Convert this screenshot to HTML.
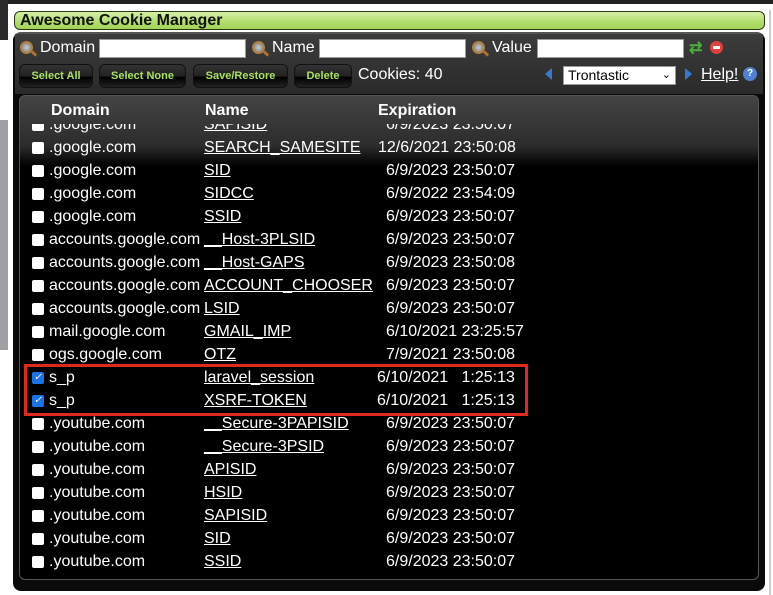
<!DOCTYPE html>
<html><head><meta charset="utf-8"><style>
*{margin:0;padding:0;box-sizing:border-box}
body{width:773px;height:595px;overflow:hidden;background:#fff;font-family:"Liberation Sans",Arial,sans-serif;position:relative}
.abs{position:absolute}
.title{left:14px;top:11px;width:751px;height:19px;border:1px solid #2a3a10;border-radius:6px;background:linear-gradient(#d6f0a8,#b0dc6a 60%,#a5d45c);font-weight:bold;font-size:16px;line-height:17px;padding-left:5px;color:#111}
.panel{left:13px;top:32px;width:752px;height:559px;background:#0a0a0a;border-radius:8px;border-top:2px solid #555}
.panelTop{left:15px;top:34px;width:748px;height:60px;background:linear-gradient(#3c3c3c,#2a2a2a)}
.lbl{color:#fff;font-size:16px;top:39px}
.inp{background:#fff;border:1px solid #999;height:19px;top:39px}
.mag{width:13px;height:13px;border-radius:50%;border:2px solid #b08040;background:radial-gradient(#ccc,#777);top:41px}
.mag:after{content:"";position:absolute;left:9px;top:9px;width:6px;height:3px;background:#b07030;transform:rotate(45deg)}
.btn{top:64px;height:24px;border-radius:6px;background:linear-gradient(#333 0%,#222 50%,#000 55%,#222);border:1px solid #111;color:#a8e060;font-weight:bold;font-size:11px;text-align:center;line-height:22px}
.inner{left:19px;top:95px;width:740px;height:485px;border-radius:6px;border:1px solid #555;background:linear-gradient(#444 0px,#2c2c2c 50px,#000 70px,#000);overflow:hidden}
.hd{top:102px;color:#fff;font-weight:bold;font-size:16px}
.rows{left:20px;top:124px;width:700px;height:455px;overflow:hidden}
.row{position:absolute;left:0;height:23px;width:700px;color:#fff;font-size:16px;line-height:23px}
.cb{position:absolute;left:12px;top:6px;width:12px;height:12px;background:#fff;border-radius:2px}
.cb.on{background:#1a73e8;color:#fff;font-size:10px;line-height:12px;text-align:center}
.d{position:absolute;left:29px}.n{position:absolute;left:184px;text-decoration:underline}.e{position:absolute;left:366px}
</style></head><body>
<div class="abs" style="left:0;top:0;width:773px;height:4px;background:#222"></div>
<div class="abs" style="left:0;top:0;width:8px;height:40px;background:#2a2a2a"></div>
<div class="abs" style="left:0;top:120px;width:8px;height:230px;background:#a0a0a4"></div>
<div class="abs" style="left:769px;top:10px;width:2px;height:585px;background:#ccc"></div>
<div class="abs title">Awesome Cookie Manager</div>
<div class="abs panel"></div>
<div class="abs panelTop"></div>
<div class="abs mag" style="left:20px"></div><div class="abs lbl" style="left:40px">Domain</div><div class="abs inp" style="left:99px;width:147px"></div>
<div class="abs mag" style="left:252px"></div><div class="abs lbl" style="left:272px">Name</div><div class="abs inp" style="left:319px;width:147px"></div>
<div class="abs mag" style="left:472px"></div><div class="abs lbl" style="left:492px">Value</div><div class="abs inp" style="left:537px;width:147px"></div>
<div class="abs" style="left:689px;top:38px;color:#4cae3c;font-size:16px;font-weight:bold">⇄</div>
<div class="abs" style="left:710px;top:41px;width:13px;height:13px;border-radius:50%;background:#e04040"><div style="margin:5px 3px;height:3px;background:#fff"></div></div>
<div class="abs btn" style="left:19px;width:74px">Select All</div>
<div class="abs btn" style="left:99px;width:87px">Select None</div>
<div class="abs btn" style="left:193px;width:95px">Save/Restore</div>
<div class="abs btn" style="left:294px;width:58px">Delete</div>
<div class="abs lbl" style="left:358px;top:66px">Cookies: 40</div>
<div class="abs" style="left:545px;top:68px;width:0;height:0;border-top:6px solid transparent;border-bottom:6px solid transparent;border-right:7px solid #3a78d0"></div>
<div class="abs" style="left:563px;top:66px;width:113px;height:19px;background:#fff;border:1px solid #999;font-size:14px;line-height:17px;padding-left:4px">Trontastic<span style="position:absolute;right:4px;font-size:11px">⌄</span></div>
<div class="abs" style="left:685px;top:68px;width:0;height:0;border-top:6px solid transparent;border-bottom:6px solid transparent;border-left:7px solid #3a78d0"></div>
<div class="abs lbl" style="left:701px;top:66px;text-decoration:underline">Help!</div>
<div class="abs" style="left:743px;top:67px;width:14px;height:14px;border-radius:50%;background:#5080d0;color:#fff;font-size:10px;font-weight:bold;text-align:center;line-height:14px">?</div>
<div class="abs inner"></div>
<div class="abs hd" style="left:51px">Domain</div>
<div class="abs hd" style="left:205px">Name</div>
<div class="abs hd" style="left:378px">Expiration</div>
<div class="abs rows">
<div class="row" style="top:-11px"><i class="cb"></i><span class="d">.google.com</span><span class="n">SAPISID</span><span class="e">6/9/2023 23:50:07</span></div>
<div class="row" style="top:12px"><i class="cb"></i><span class="d">.google.com</span><span class="n">SEARCH_SAMESITE</span><span class="e" style="left:358px">12/6/2021 23:50:08</span></div>
<div class="row" style="top:35px"><i class="cb"></i><span class="d">.google.com</span><span class="n">SID</span><span class="e">6/9/2023 23:50:07</span></div>
<div class="row" style="top:58px"><i class="cb"></i><span class="d">.google.com</span><span class="n">SIDCC</span><span class="e">6/9/2022 23:54:09</span></div>
<div class="row" style="top:81px"><i class="cb"></i><span class="d">.google.com</span><span class="n">SSID</span><span class="e">6/9/2023 23:50:07</span></div>
<div class="row" style="top:104px"><i class="cb"></i><span class="d">accounts.google.com</span><span class="n">__Host-3PLSID</span><span class="e">6/9/2023 23:50:07</span></div>
<div class="row" style="top:127px"><i class="cb"></i><span class="d">accounts.google.com</span><span class="n">__Host-GAPS</span><span class="e">6/9/2023 23:50:08</span></div>
<div class="row" style="top:150px"><i class="cb"></i><span class="d">accounts.google.com</span><span class="n">ACCOUNT_CHOOSER</span><span class="e">6/9/2023 23:50:07</span></div>
<div class="row" style="top:173px"><i class="cb"></i><span class="d">accounts.google.com</span><span class="n">LSID</span><span class="e">6/9/2023 23:50:07</span></div>
<div class="row" style="top:196px"><i class="cb"></i><span class="d">mail.google.com</span><span class="n">GMAIL_IMP</span><span class="e">6/10/2021 23:25:57</span></div>
<div class="row" style="top:219px"><i class="cb"></i><span class="d">ogs.google.com</span><span class="n">OTZ</span><span class="e">7/9/2021 23:50:08</span></div>
<div class="row" style="top:242px"><i class="cb on">✓</i><span class="d">s_p</span><span class="n">laravel_session</span><span class="e" style="left:357px">6/10/2021&nbsp;&nbsp;&nbsp;1:25:13</span></div>
<div class="row" style="top:265px"><i class="cb on">✓</i><span class="d">s_p</span><span class="n">XSRF-TOKEN</span><span class="e" style="left:357px">6/10/2021&nbsp;&nbsp;&nbsp;1:25:13</span></div>
<div class="row" style="top:288px"><i class="cb"></i><span class="d">.youtube.com</span><span class="n">__Secure-3PAPISID</span><span class="e">6/9/2023 23:50:07</span></div>
<div class="row" style="top:311px"><i class="cb"></i><span class="d">.youtube.com</span><span class="n">__Secure-3PSID</span><span class="e">6/9/2023 23:50:07</span></div>
<div class="row" style="top:334px"><i class="cb"></i><span class="d">.youtube.com</span><span class="n">APISID</span><span class="e">6/9/2023 23:50:07</span></div>
<div class="row" style="top:357px"><i class="cb"></i><span class="d">.youtube.com</span><span class="n">HSID</span><span class="e">6/9/2023 23:50:07</span></div>
<div class="row" style="top:380px"><i class="cb"></i><span class="d">.youtube.com</span><span class="n">SAPISID</span><span class="e">6/9/2023 23:50:07</span></div>
<div class="row" style="top:403px"><i class="cb"></i><span class="d">.youtube.com</span><span class="n">SID</span><span class="e">6/9/2023 23:50:07</span></div>
<div class="row" style="top:426px"><i class="cb"></i><span class="d">.youtube.com</span><span class="n">SSID</span><span class="e">6/9/2023 23:50:07</span></div>
</div>
<div class="abs" style="left:24px;top:364px;width:504px;height:52px;border:3px solid #e0281c"></div>
</body></html>
